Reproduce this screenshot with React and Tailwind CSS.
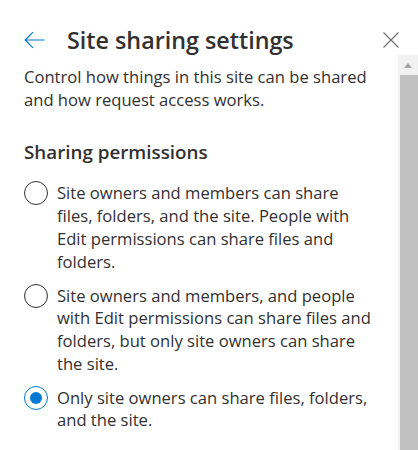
const FONT = { fontFamily: '"Open Sans", "Noto Sans", sans-serif' };

function Radio({ checked, lines }) {
  return (
    <div className="flex items-start">
      <div
        className={
          'mt-[-1px] flex h-[24px] w-[24px] shrink-0 items-center justify-center rounded-full border bg-white ' +
          (checked ? 'border-[#0078d4]' : 'border-[#323130]')
        }
      >
        {checked && <div className="h-[12px] w-[12px] rounded-full bg-[#0078d4]" />}
      </div>
      <div className="ml-[9px] text-[16.6px] leading-[22.7px] text-[#323130]">
        {lines.map((l, i) => (
          <div key={i} className="whitespace-nowrap">
            {l}
          </div>
        ))}
      </div>
    </div>
  );
}

export default function App() {
  return (
    <div className="flex h-[450px] w-[418px] flex-col overflow-hidden bg-white" style={FONT}>
      <div className="flex h-[55px] shrink-0 items-start pt-[25px]">
        <div className="flex h-[30px] flex-1 items-center">
          <button className="ml-[24px] flex h-[20px] w-[21px] items-center justify-center">
            <svg width="21" height="18" viewBox="0 0 21 18" fill="none">
              <path d="M20.5 9H1.2M9 1.2L1.2 9L9 16.8" stroke="#0078d4" strokeWidth="1.2" />
            </svg>
          </button>
          <h1 className="ml-[22px] whitespace-nowrap text-[23.3px] font-semibold leading-[30px] text-[#323130]">
            Site sharing settings
          </h1>
        </div>
        <button className="mr-[19px] flex h-[30px] w-[16px] items-center justify-center">
          <svg width="16" height="16" viewBox="0 0 16 16" fill="none">
            <path d="M0.5 0.5L15.5 15.5M15.5 0.5L0.5 15.5" stroke="#707070" strokeWidth="1.2" />
          </svg>
        </button>
      </div>
      <div className="flex min-h-0 flex-1">
        <div className="flex-1 pl-[24px] pt-[11px]">
          <div className="text-[16.6px] leading-[22.7px] text-[#323130]">
            <div className="whitespace-nowrap">Control how things in this site can be shared</div>
            <div className="whitespace-nowrap">and how request access works.</div>
          </div>
          <h2 className="mt-[28px] text-[18.8px] font-semibold leading-[26px] text-[#323130]">
            Sharing permissions
          </h2>
          <div className="mt-[17px] flex flex-col gap-[11.3px]">
            <Radio
              lines={[
                'Site owners and members can share',
                'files, folders, and the site. People with',
                'Edit permissions can share files and',
                'folders.',
              ]}
            />
            <Radio
              lines={[
                'Site owners and members, and people',
                'with Edit permissions can share files and',
                'folders, but only site owners can share',
                'the site.',
              ]}
            />
            <Radio checked lines={['Only site owners can share files, folders,', 'and the site.']} />
          </div>
        </div>
        <div className="flex w-[20px] shrink-0 flex-col bg-[#f1f1f1]">
          <div className="flex h-[20px] items-center justify-center">
            <svg width="8" height="5" viewBox="0 0 8 5">
              <path d="M0 5L4 0L8 5Z" fill="#a3a3a3" />
            </svg>
          </div>
          <div className="ml-[2px] flex-1 bg-[#c1c1c1]" />
        </div>
      </div>
    </div>
  );
}
